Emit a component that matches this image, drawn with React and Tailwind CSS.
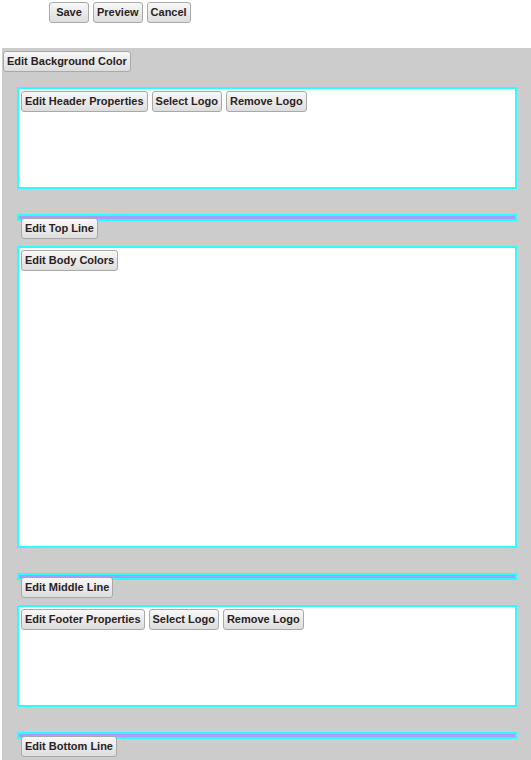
import React from 'react'

const btn =
  "inline-flex items-center justify-center h-[21px] px-[3px] rounded-[3px] border border-[#a9a9a9] bg-gradient-to-b from-[#f8f8f8] to-[#dddddd] text-[11px] font-bold text-[#2a2222] leading-none whitespace-nowrap"

function Btn({ children, className = '' }) {
  return <button className={`${btn} ${className}`}>{children}</button>
}

function Line({ label }) {
  return (
    <div className="mt-[25px] w-[500px]">
      <div className="h-[7px] border-2 border-[#2dfdff] bg-[#a99cff]" />
      <div className="relative -mt-[3px] pl-[4px] flex">
        <Btn>{label}</Btn>
      </div>
    </div>
  )
}

function Box({ children, tall }) {
  return (
    <div className={`w-[500px] ${tall ? 'h-[302px]' : 'h-[102px]'} border-2 border-[#2dfdff] bg-white p-[2px] flex items-start gap-[4px]`}>
      {children}
    </div>
  )
}

export default function App() {
  return (
    <div className="min-h-screen bg-white font-['Liberation_Sans',Arial,sans-serif] leading-none">
      {/* toolbar */}
      <div className="flex items-start gap-[4px] pl-[49px] pt-[2px] h-[48px]">
        <Btn className="w-[40px]">Save</Btn>
        <Btn>Preview</Btn>
        <Btn>Cancel</Btn>
      </div>

      {/* template panel */}
      <div className="ml-[2px] bg-[#cccccc] pt-[3px] pb-[10px]">
        <div className="pl-[1px] flex">
          <Btn>Edit Background Color</Btn>
        </div>
        <div className="pl-[15px] pt-[15px]">
          <Box>
            <Btn>Edit Header Properties</Btn>
            <Btn>Select Logo</Btn>
            <Btn>Remove Logo</Btn>
          </Box>
          <Line label="Edit Top Line" />
          <div className="mt-[7px]">
            <Box tall>
              <Btn>Edit Body Colors</Btn>
            </Box>
          </div>
          <Line label="Edit Middle Line" />
          <div className="mt-[7px]">
            <Box>
              <Btn>Edit Footer Properties</Btn>
              <Btn>Select Logo</Btn>
              <Btn>Remove Logo</Btn>
            </Box>
          </div>
          <Line label="Edit Bottom Line" />
        </div>
      </div>
    </div>
  )
}
